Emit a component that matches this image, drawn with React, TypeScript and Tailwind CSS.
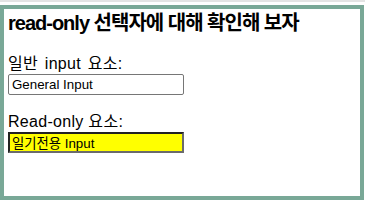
import React from 'react';

const font = { fontFamily: '"Liberation Sans", "Noto Sans CJK KR", sans-serif' };

const App: React.FC = () => {
  return (
    <div className="w-[365px] h-[202px] bg-white border-t-2 border-[#e4e4e4] pt-[3px]" style={font}>
      <div className="w-[364px] h-[195px] border-4 border-[#79a897] bg-white pl-[4px] pt-[3px]">
        <h2 className="text-[20px] leading-[23px] font-bold text-black tracking-[-1px]">
          read-only 선택자에 대해 확인해 보자
        </h2>

        <div className="mt-[20px] flex flex-col items-start">
          <label className="text-[16px] leading-[18px] text-black tracking-[0.3px] [word-spacing:2px]">일반 input 요소:</label>
          <input
            type="text"
            defaultValue="General Input"
            className="mt-[1px] w-[176px] h-[21px] px-[3px] text-[13.33px] text-black border border-[#767676] rounded-[2px] bg-white outline-none"
            style={font}
          />
        </div>

        <div className="mt-[18px] flex flex-col items-start">
          <label className="text-[16px] leading-[18px] text-black tracking-[0.3px]">Read-only 요소:</label>
          <input
            type="text"
            readOnly
            defaultValue="일기전용 Input"
            className="mt-[1px] w-[176px] h-[21px] px-[2px] text-[13.33px] text-black bg-[#ffff00] border-2 border-t-[#222222] border-l-[#222222] border-b-[#6b6b6b] border-r-[#6b6b6b] outline-none"
            style={font}
          />
        </div>
      </div>
    </div>
  );
};

export default App;
